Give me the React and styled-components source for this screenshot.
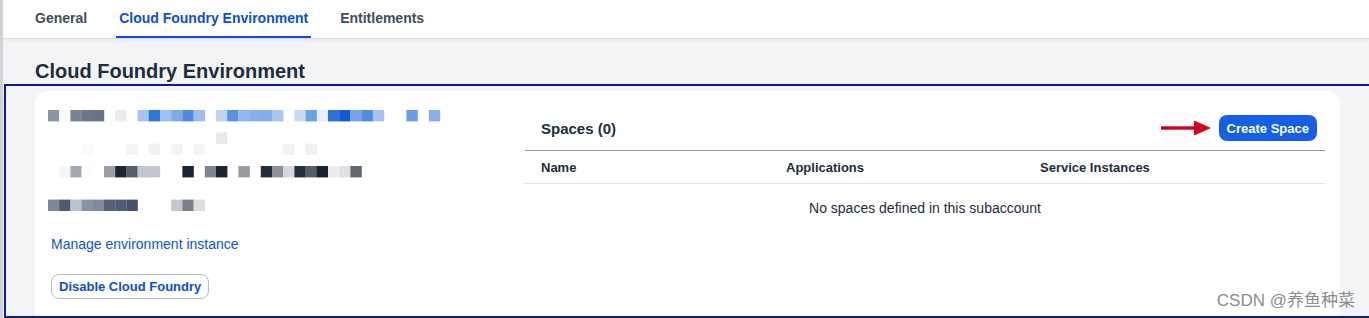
import React from 'react'
import styled, { createGlobalStyle } from 'styled-components'

const GlobalStyle = createGlobalStyle`
  html, body {
    margin: 0;
    padding: 0;
    background: #f3f4f6;
    font-family: "Liberation Sans", Arial, sans-serif;
    color: #1d2d3e;
  }
`

// redacted (pixelated) account details, one string per mosaic row
const CELL = 11.2
const mosaic = [
  { row: 0, cells: ['#8a96a3', '#fafafa', '#7a8594', '#6c7788', '#687387', null, '#ebecee', null, '#a6c4f0', '#2f78d8', '#a0c0f0', '#80aaea', '#4f8be0', '#9dbff0', null, '#bcd4f4', '#5a93e2', '#92b6ee', '#86afeb', '#84adeb', '#a8c6f1', null, '#c5dbf6', '#6aa0e6', '#e6effb', '#2a72da', '#1559d1', '#77a4e8', '#4f8be0', '#a4c3f0', null, null, '#6a9de5', null, '#86afeb'] },
  { row: 2, offset: 15, cells: ['#e8e9eb'] },
  { row: 3, cells: [null, null, null, '#fafafa', null, null, null, '#f3f4f4', null, '#f0f1f2', null, '#f3f4f4', null, '#f3f4f4', null, null, null, null, null, null, null, '#f2f3f3', null, '#f0f1f1'] },
  { row: 5, cells: [null, '#f3f4f6', '#a3aab5', '#fafbfb', null, '#9a9ea6', '#1b2433', '#575e69', '#c3c6cc', '#c3c6cc', null, null, '#1a2332', null, '#80858e', '#1c2332', null, '#979ba1', null, '#242e3b', '#8c9097', '#d6d7db', '#252f3c', '#565c69', '#1a2232', '#ececec', '#e0e1e4', '#616872'] },
  { row: 8, cells: ['#808894', '#4e5b71', '#bcc2ca', '#8793a3', '#7f8a9c', '#556279', '#515e76', '#46536c', null, null, null, '#c5c7cb', '#7a7f86', '#dcdde1'] },
]

const columns = ['Name', 'Applications', 'Service Instances']

const Page = styled.div`
  border-left: 3px solid #d0d2d6;
  height: 318px;
  overflow: hidden;
  box-sizing: border-box;
  position: relative;
`

const TabBar = styled.nav`
  display: flex;
  gap: 26px;
  height: 38px;
  padding-left: 29px;
  background: #fff;
  box-shadow: 0 1px 0 #d9dbdf, 0 2px 3px rgba(0, 0, 0, 0.06);
  position: relative;
  z-index: 1;
`

const Tab = styled.div`
  display: flex;
  align-items: center;
  padding: 0 3px;
  font-size: 14px;
  font-weight: bold;
  color: ${({ $active }) => ($active ? '#0b4fd6' : '#3f4d5e')};
  border-bottom: 2px solid ${({ $active }) => ($active ? '#0b4fd6' : 'transparent')};
  box-sizing: border-box;
`

const Heading = styled.h1`
  margin: 0;
  padding: 21px 0 0 32px;
  height: 25px;
  line-height: 24px;
  font-size: 20px;
  font-weight: bold;
  color: #1d2d3e;
`

const Highlight = styled.section`
  margin: 0 0 0 1px;
  border: 2px solid #0b1c8c;
  border-right: none;
  height: 225px;
  padding: 5px 29px 0 29px;
  overflow: hidden;
`

const Card = styled.div`
  display: flex;
  height: 240px;
  background: #fff;
  border-radius: 12px 12px 0 0;
  padding: 19px 15px 0 13px;
  box-sizing: border-box;
`

const Details = styled.div`
  width: 477px;
  flex: none;
  display: flex;
  flex-direction: column;
`

const Mosaic = styled.svg`
  display: block;
`

const Link = styled.a`
  margin: 24px 0 0 3px;
  font-size: 14px;
  line-height: 18px;
  color: #0b56d6;
  text-decoration: none;
  cursor: pointer;
`

const GhostButton = styled.button`
  align-self: flex-start;
  margin: 21px 0 0 3px;
  height: 25px;
  padding: 0 7px;
  background: #fff;
  border: 1px solid #b4bcc6;
  border-radius: 8px;
  font-family: inherit;
  font-size: 13px;
  font-weight: bold;
  color: #0b4fd0;
`

const Spaces = styled.div`
  flex: 1;
  padding-top: 5px;
`

const SpacesHeader = styled.div`
  display: flex;
  align-items: center;
  height: 26px;
  padding: 0 8px 9px 16px;
  border-bottom: 1px solid #8f9cab;
`

const SpacesTitle = styled.h2`
  margin: 0;
  flex: 1;
  font-size: 15px;
  font-weight: bold;
  color: #1d2d3e;
`

const Arrow = styled.svg`
  display: block;
  margin-right: 8px;
`

const PrimaryButton = styled.button`
  height: 26px;
  padding: 0 8px;
  border: none;
  border-radius: 8px;
  background: #155ee8;
  color: #fff;
  font-family: inherit;
  font-size: 13px;
  font-weight: bold;
`

const HeaderRow = styled.div`
  display: grid;
  grid-template-columns: 245px 254px 1fr;
  height: 32px;
  align-items: center;
  border-bottom: 1px solid #e5e5e5;
`

const HeaderCell = styled.div`
  padding-left: 16px;
  font-size: 13px;
  font-weight: bold;
  color: #1d2d3e;
`

const Empty = styled.div`
  padding-top: 15px;
  text-align: center;
  font-size: 14px;
  line-height: 18px;
  color: #1d2d3e;
`

const Watermark = styled.div`
  position: absolute;
  right: 14px;
  bottom: 7px;
  font-family: "Liberation Sans", "Noto Sans CJK SC", sans-serif;
  font-size: 17px;
  color: #8c8c8c;
`

function RedactedBlock() {
  return (
    <Mosaic width="400" height="101" viewBox="0 0 400 101">
      {mosaic.flatMap(({ row, offset = 0, cells }) =>
        cells.map((fill, i) =>
          fill ? (
            <rect
              key={`${row}-${i}`}
              x={(i + offset) * CELL}
              y={row * CELL}
              width={CELL + 0.2}
              height={CELL + 0.2}
              fill={fill}
            />
          ) : null
        )
      )}
    </Mosaic>
  )
}

export default function App() {
  return (
    <>
      <GlobalStyle />
      <Page>
        <TabBar>
          <Tab>General</Tab>
          <Tab $active>Cloud Foundry Environment</Tab>
          <Tab>Entitlements</Tab>
        </TabBar>
        <Heading>Cloud Foundry Environment</Heading>
        <Highlight>
          <Card>
            <Details>
              <RedactedBlock />
              <Link>Manage environment instance</Link>
              <GhostButton>Disable Cloud Foundry</GhostButton>
            </Details>
            <Spaces>
              <SpacesHeader>
                <SpacesTitle>Spaces (0)</SpacesTitle>
                <Arrow width="50" height="16" viewBox="0 0 50 16">
                  <rect x="0" y="6.3" width="36" height="3.4" fill="#d0021b" />
                  <polygon points="33,0.5 50,8 33,15.5" fill="#d0021b" />
                </Arrow>
                <PrimaryButton>Create Space</PrimaryButton>
              </SpacesHeader>
              <HeaderRow>
                {columns.map((c) => (
                  <HeaderCell key={c}>{c}</HeaderCell>
                ))}
              </HeaderRow>
              <Empty>No spaces defined in this subaccount</Empty>
            </Spaces>
          </Card>
        </Highlight>
        <Watermark>CSDN @养鱼种菜</Watermark>
      </Page>
    </>
  )
}
